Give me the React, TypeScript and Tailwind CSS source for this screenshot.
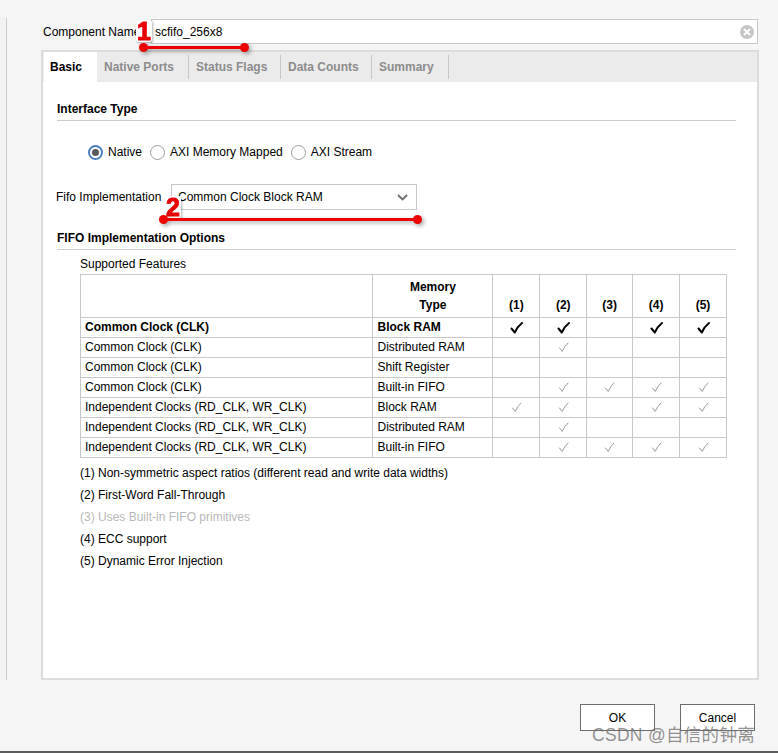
import React from 'react';

const rows = [
  { clock: 'Common Clock (CLK)', mem: 'Block RAM', checks: [1, 2, 4, 5], bold: true },
  { clock: 'Common Clock (CLK)', mem: 'Distributed RAM', checks: [2] },
  { clock: 'Common Clock (CLK)', mem: 'Shift Register', checks: [] },
  { clock: 'Common Clock (CLK)', mem: 'Built-in FIFO', checks: [2, 3, 4, 5] },
  { clock: 'Independent Clocks (RD_CLK, WR_CLK)', mem: 'Block RAM', checks: [1, 2, 4, 5] },
  { clock: 'Independent Clocks (RD_CLK, WR_CLK)', mem: 'Distributed RAM', checks: [2] },
  { clock: 'Independent Clocks (RD_CLK, WR_CLK)', mem: 'Built-in FIFO', checks: [2, 3, 4, 5] },
];

function Check({ dark }: { dark?: boolean }) {
  if (dark) {
    return (
      <svg width="13" height="12" viewBox="0 0 13 12" className="mx-auto block">
        <path d="M1.5 6.5 L4.8 10.5 Q7.5 4.5 12 1" fill="none" stroke="#000" strokeWidth="2" strokeLinecap="round" strokeLinejoin="round" />
      </svg>
    );
  }
  return (
    <svg width="11" height="11" viewBox="0 0 11 11" className="mx-auto block">
      <path d="M1.5 6 L4.2 9.5 Q6.5 4 10 1" fill="none" stroke="#9c9c9c" strokeWidth="1" strokeLinecap="round" strokeLinejoin="round" />
    </svg>
  );
}

function Radio({ checked, label }: { checked?: boolean; label: string }) {
  return (
    <div className="flex items-center gap-[5px]">
      {checked ? (
        <span className="w-[15px] h-[15px] rounded-full border-2 border-[#4d7fc4] bg-white flex items-center justify-center">
          <span className="w-[7px] h-[7px] rounded-full bg-[#595959]" />
        </span>
      ) : (
        <span className="w-[15px] h-[15px] rounded-full border border-[#9e9e9e] bg-white" />
      )}
      <span>{label}</span>
    </div>
  );
}

function Marker({ n, x, y, x1, x2, ly }: { n: string; x: number; y: number; x1: number; x2: number; ly: number }) {
  return (
    <>
      <span
        className="absolute px-[1px] bg-white rounded-[2px] text-[25px] font-bold leading-[22px] text-[#e60000] font-['Liberation_Sans',Arial,sans-serif] [-webkit-text-stroke:1px_#e60000] [filter:drop-shadow(1px_1px_1px_rgba(0,0,0,0.3))]"
        style={{ left: x, top: y }}
      >
        {n}
      </span>
      <div
        className="absolute h-[3px] bg-[#ee0000] [filter:drop-shadow(2px_2px_2px_rgba(0,0,0,0.35))]"
        style={{ left: x1, top: ly - 1, width: x2 - x1 }}
      >
        <span className="absolute -left-[4px] -top-[3px] w-[9px] h-[9px] rounded-full bg-[#ee0000]" />
        <span className="absolute -right-[4px] -top-[3px] w-[9px] h-[9px] rounded-full bg-[#ee0000]" />
      </div>
    </>
  );
}

export default function App() {
  const tabs = [
    { name: 'Native Ports', w: 'w-[92px]' },
    { name: 'Status Flags', w: 'w-[92px]' },
    { name: 'Data Counts', w: 'w-[91px]' },
    { name: 'Summary', w: 'w-[77px]' },
  ];

  return (
    <div className="relative w-[778px] h-[753px] overflow-hidden bg-[#f5f5f5] text-[12px] text-black font-['Liberation_Sans',Arial,sans-serif]">
      <div className="flex h-[751px]">
        {/* left panel edge */}
        <div className="mt-[18px] h-[662px] w-[7px] border-r border-[#cdcdcd] bg-[#f2f2f2]" />

        <div className="ml-[34px] w-[718px] flex flex-col">
          {/* component name */}
          <div className="mt-[19px] flex items-center h-[25px]">
            <span className="w-[110px] pl-[2px]">Component Name</span>
            <div className="relative flex-1 mr-[1px] h-[25px] bg-white border border-[#c8c8c8] flex items-center pl-[3px]">
              scfifo_256x8
              <span className="absolute right-[3px] top-[5px] w-[14px] h-[14px] rounded-full bg-[#c6c6c6] flex items-center justify-center">
                <svg width="8" height="8" viewBox="0 0 8 8">
                  <path d="M1 1 L7 7 M7 1 L1 7" stroke="white" strokeWidth="1.8" />
                </svg>
              </span>
            </div>
          </div>

          {/* tab panel */}
          <div className="mt-[6px] h-[630px] border-2 border-[#dcdcdc] flex flex-col bg-white">
            <div className="h-[30px] bg-[#ebebeb] flex pl-[1px] font-bold">
              <div className="w-[53px] bg-white flex items-center pl-[6px]">Basic</div>
              {tabs.map((t) => (
                <div key={t.name} className={`${t.w} flex items-center justify-between text-[#8c8c8c]`}>
                  <span className="pl-[7px]">{t.name}</span>
                  <span className="w-px h-[24px] bg-[#c6c6c6]" />
                </div>
              ))}
            </div>

            <div className="flex-1 bg-white pl-[14px] pr-[21px] flex flex-col">
              <div className="mt-[20px] font-bold leading-[15px]">Interface Type</div>
              <div className="mt-[3px] h-px bg-[#cdcdcd]" />

              <div className="mt-[23px] ml-[31px] flex items-center gap-[8px] h-[16px]">
                <Radio checked label="Native" />
                <Radio label="AXI Memory Mapped" />
                <Radio label="AXI Stream" />
              </div>

              <div className="mt-[24px] -ml-[1px] flex items-center h-[26px]">
                <span className="w-[115px]">Fifo Implementation</span>
                <div className="w-[246px] h-[26px] border border-[#c8c8c8] bg-white flex items-center justify-between pl-[6px] pr-[8px]">
                  <span>Common Clock Block RAM</span>
                  <svg width="11" height="7" viewBox="0 0 11 7">
                    <path d="M1 1 L5.5 5.5 L10 1" fill="none" stroke="#6b6b6b" strokeWidth="1.8" />
                  </svg>
                </div>
              </div>

              <div className="mt-[21px] font-bold leading-[15px]">FIFO Implementation Options</div>
              <div className="mt-[3px] h-px bg-[#cdcdcd]" />

              <div className="mt-[7px] ml-[23px] leading-[15px]">Supported Features</div>

              <table className="mt-[2px] ml-[23px] w-[647px] border-collapse">
                <colgroup>
                  <col className="w-[293px]" />
                  <col className="w-[120px]" />
                  <col className="w-[47px]" />
                  <col className="w-[47px]" />
                  <col className="w-[46px]" />
                  <col className="w-[47px]" />
                  <col className="w-[47px]" />
                </colgroup>
                <thead>
                  <tr className="h-[43px] font-bold align-bottom">
                    <th className="border border-[#c8c8c8]" />
                    <th className="border border-[#c8c8c8] font-bold leading-[18px] pb-[3px]">
                      Memory
                      <br />
                      Type
                    </th>
                    {['(1)', '(2)', '(3)', '(4)', '(5)'].map((h) => (
                      <th key={h} className="border border-[#c8c8c8] font-bold pb-[4px] leading-[15px]">
                        {h}
                      </th>
                    ))}
                  </tr>
                </thead>
                <tbody>
                  {rows.map((r, i) => (
                    <tr key={i} className={`h-[20px] ${r.bold ? 'font-bold' : ''}`}>
                      <td className="border border-[#c8c8c8] pl-[4px] leading-[15px]">{r.clock}</td>
                      <td className="border border-[#c8c8c8] pl-[4px] leading-[15px]">{r.mem}</td>
                      {[1, 2, 3, 4, 5].map((c) => (
                        <td key={c} className="border border-[#c8c8c8]">
                          {r.checks.includes(c) ? <Check dark={r.bold} /> : null}
                        </td>
                      ))}
                    </tr>
                  ))}
                </tbody>
              </table>

              <div className="mt-[4px] ml-[23px] flex flex-col leading-[22px]">
                <span>(1) Non-symmetric aspect ratios (different read and write data widths)</span>
                <span>(2) First-Word Fall-Through</span>
                <span className="text-[#b8b8b8]">(3) Uses Built-in FIFO primitives</span>
                <span>(4) ECC support</span>
                <span>(5) Dynamic Error Injection</span>
              </div>
            </div>
          </div>

          {/* buttons */}
          <div className="mt-[24px] flex justify-end gap-[25px] pr-[4px]">
            <button className="w-[75px] h-[27px] bg-white border border-[#6e6e6e]">OK</button>
            <button className="w-[75px] h-[27px] bg-white border border-[#6e6e6e]">Cancel</button>
          </div>
        </div>
      </div>
      <div className="h-[2px] bg-[#5c5c5c]" />

      {/* annotations */}
      <Marker n="1" x={136} y={20} x1={143} x2={245} ly={47} />
      <Marker n="2" x={165} y={196} x1={163} x2={418} ly={219} />

      {/* watermark */}
      <span className="absolute left-[592px] top-[724px] text-[17.5px] leading-[22px] text-[rgba(110,110,110,0.75)] font-['Liberation_Sans','Noto_Sans_CJK_SC',sans-serif] tracking-[0.3px]">
        CSDN @自信的钟离
      </span>
    </div>
  );
}
